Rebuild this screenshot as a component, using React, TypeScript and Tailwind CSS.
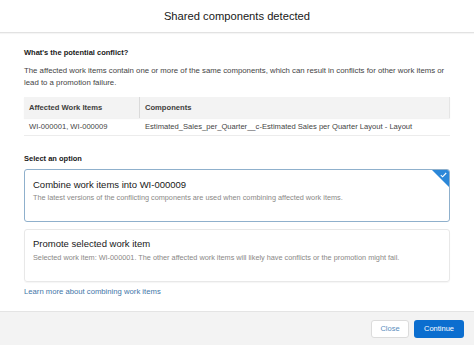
export default function App() {
  return (
    <div
      className="w-[474px] h-[345px] bg-white flex flex-col overflow-hidden text-[#3e3e3c]"
      style={{ fontFamily: "'Liberation Sans', Arial, sans-serif" }}
    >
      <div className="h-[33px] shrink-0 flex items-center justify-center border-b border-[#e2e2e2] shadow-[0_1px_1px_rgba(0,0,0,0.04)]">
        <span className="text-[11.2px] text-[#181818]">Shared components detected</span>
      </div>
      <div className="flex-1 px-[24px] pt-[14px] flex flex-col">
        <div className="text-[7.5px] leading-[12px] font-bold text-[#181818]">What's the potential conflict?</div>
        <p className="mt-[6px] text-[7.8px] leading-[12px] text-[#444444]">
          The affected work items contain one or more of the same components, which can result in conflicts for other work items or lead to a promotion failure.
        </p>
        <div className="mt-[8px] text-[7.6px]">
          <div className="flex h-[21px] bg-[#f3f3f3] items-center border-r border-[#e5e5e5] shadow-[0_1px_1px_rgba(0,0,0,0.05)]">
            <div className="w-[116px] pl-[5px] h-full flex items-center border-r-[1.5px] border-[#dadada] font-bold text-[#3e3e3c]">Affected Work Items</div>
            <div className="pl-[5px] font-bold text-[#3e3e3c]">Components</div>
          </div>
          <div className="flex h-[18px] items-center border-b border-[#ececec] text-[#444444]">
            <div className="w-[116px] pl-[5px]">WI-000001, WI-000009</div>
            <div className="pl-[5px]">Estimated_Sales_per_Quarter__c-Estimated Sales per Quarter Layout - Layout</div>
          </div>
        </div>
        <div className="mt-[17px] text-[7.5px] leading-[12px] font-bold text-[#181818]">Select an option</div>
        <div className="mt-[4px] relative h-[53px] border border-[#8fb0cc] rounded-[3px] pl-[8px] pt-[8px] overflow-hidden">
          <div className="text-[9.5px] leading-[14px] text-[#181818]">Combine work items into WI-000009</div>
          <div className="mt-[1px] text-[7.3px] leading-[10px] text-[#8a8886]">The latest versions of the conflicting components are used when combining affected work items.</div>
          <div className="absolute top-0 right-0 w-0 h-0 border-t-[17px] border-l-[17px] border-t-[#2b87d8] border-l-transparent" />
          <svg className="absolute top-[2px] right-[2px]" width="7" height="6" viewBox="0 0 7 6">
            <path d="M0.8 3.2 L2.6 4.8 L6.2 1" stroke="white" strokeWidth="1.1" fill="none" />
          </svg>
        </div>
        <div className="mt-[7px] h-[53px] border border-[#e8e8e8] rounded-[3px] pl-[8px] pt-[7px] shadow-[0_1px_1px_rgba(0,0,0,0.04)]">
          <div className="text-[9.5px] leading-[14px] text-[#181818]">Promote selected work item</div>
          <div className="mt-[2px] text-[7.3px] leading-[10px] text-[#8a8886]">Selected work item: WI-000001. The other affected work items will likely have conflicts or the promotion might fail.</div>
        </div>
        <a className="mt-[4px] text-[7.7px] leading-[12px] text-[#3f76a8]">Learn more about combining work items</a>
      </div>
      <div className="h-[34px] shrink-0 bg-[#f3f3f3] border-t border-[#e4e4e4] flex items-center justify-end pr-[10px] gap-[5px]">
        <button className="h-[18px] w-[38px] bg-white border border-[#dcdcdc] rounded-[3px] text-[7.5px] text-[#5a8dbd]">Close</button>
        <button className="h-[18px] w-[50px] bg-[#0b6ecf] rounded-[3px] text-[7.5px] text-white">Continue</button>
      </div>
    </div>
  );
}
